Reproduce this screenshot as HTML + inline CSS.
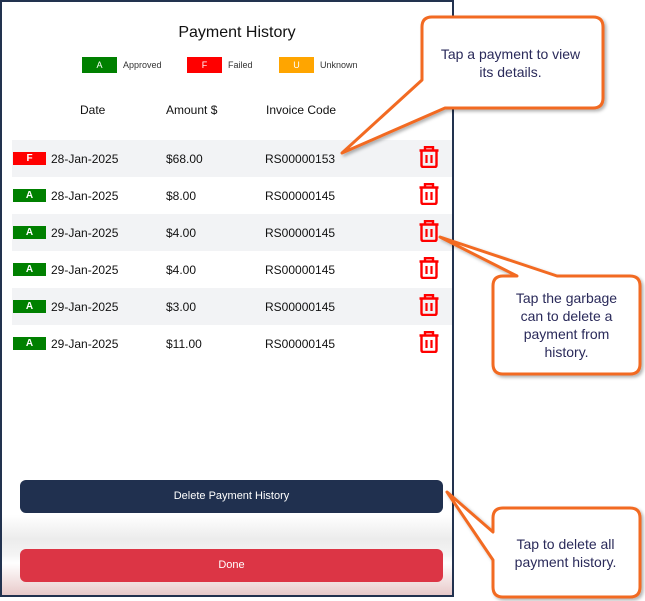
<!DOCTYPE html>
<html><head><meta charset="utf-8"><style>
body{margin:0;width:645px;height:601px;background:#fff;position:relative;overflow:hidden;font-family:"Liberation Sans",sans-serif;}
.frame{position:absolute;left:0;top:0;width:450px;height:593px;border:2px solid #22324f;background:#fff;}
.t{position:absolute;color:#111;white-space:nowrap;}
.title{left:10px;width:454px;text-align:center;top:24px;font-size:16px;}
.badge{position:absolute;height:16px;color:#fff;font-size:9px;text-align:center;line-height:16px;}
.lg{position:absolute;font-size:9px;color:#333;top:60px;}
.hd{position:absolute;top:103px;font-size:12px;color:#111;}
.row{position:absolute;left:12px;width:440px;height:37px;}
.row .b{position:absolute;left:1px;top:12px;width:33px;height:13px;color:#fff;font-size:10px;font-weight:bold;text-align:center;line-height:13px;}
.row span{position:absolute;top:12px;font-size:12px;color:#111;}
.row svg{position:absolute;left:407px;top:6px;}
.btn{position:absolute;left:20px;width:423px;height:33px;border-radius:6px;color:#fff;font-size:11px;text-align:center;line-height:33px;}
.ct{position:absolute;color:#2a2a5a;font-size:14px;text-align:center;line-height:18px;}
</style></head><body>
<div class="frame"></div>
<div style="position:absolute;left:2px;top:515px;width:450px;height:80px;background:linear-gradient(#fff,#ececec 30%,#f4f4f4 50%,#fff 60%,#e8caca)"></div>
<div class="t title">Payment History</div>
<div class="badge" style="left:82px;top:57px;width:35px;background:#008000">A</div><div class="lg" style="left:123px">Approved</div>
<div class="badge" style="left:187px;top:57px;width:35px;background:#f00">F</div><div class="lg" style="left:228px">Failed</div>
<div class="badge" style="left:279px;top:57px;width:35px;background:#ffa500">U</div><div class="lg" style="left:320px">Unknown</div>
<div class="hd" style="left:80px">Date</div><div class="hd" style="left:166px">Amount $</div><div class="hd" style="left:266px">Invoice Code</div>

<div class="row" style="top:140px;background:#f2f3f5"><div class="b" style="background:#f00">F</div><span style="left:39px">28-Jan-2025</span><span style="left:154px">$68.00</span><span style="left:253px">RS00000153</span><svg width="20" height="22" viewBox="0 0 20 22"><path d="M0.5 4.5H19.5M6 4V1.2H14V4M2.5 5V19Q2.5 21 4.5 21H15.5Q17.5 21 17.5 19V5" fill="none" stroke="#f00" stroke-width="2.4"/><path d="M7.5 9V17M12.5 9V17" stroke="#f00" stroke-width="2.2"/></svg></div>
<div class="row" style="top:177px"><div class="b" style="background:#008000">A</div><span style="left:39px">28-Jan-2025</span><span style="left:154px">$8.00</span><span style="left:253px">RS00000145</span><svg width="20" height="22" viewBox="0 0 20 22"><path d="M0.5 4.5H19.5M6 4V1.2H14V4M2.5 5V19Q2.5 21 4.5 21H15.5Q17.5 21 17.5 19V5" fill="none" stroke="#f00" stroke-width="2.4"/><path d="M7.5 9V17M12.5 9V17" stroke="#f00" stroke-width="2.2"/></svg></div>
<div class="row" style="top:214px;background:#f2f3f5"><div class="b" style="background:#008000">A</div><span style="left:39px">29-Jan-2025</span><span style="left:154px">$4.00</span><span style="left:253px">RS00000145</span><svg width="20" height="22" viewBox="0 0 20 22"><path d="M0.5 4.5H19.5M6 4V1.2H14V4M2.5 5V19Q2.5 21 4.5 21H15.5Q17.5 21 17.5 19V5" fill="none" stroke="#f00" stroke-width="2.4"/><path d="M7.5 9V17M12.5 9V17" stroke="#f00" stroke-width="2.2"/></svg></div>
<div class="row" style="top:251px"><div class="b" style="background:#008000">A</div><span style="left:39px">29-Jan-2025</span><span style="left:154px">$4.00</span><span style="left:253px">RS00000145</span><svg width="20" height="22" viewBox="0 0 20 22"><path d="M0.5 4.5H19.5M6 4V1.2H14V4M2.5 5V19Q2.5 21 4.5 21H15.5Q17.5 21 17.5 19V5" fill="none" stroke="#f00" stroke-width="2.4"/><path d="M7.5 9V17M12.5 9V17" stroke="#f00" stroke-width="2.2"/></svg></div>
<div class="row" style="top:288px;background:#f2f3f5"><div class="b" style="background:#008000">A</div><span style="left:39px">29-Jan-2025</span><span style="left:154px">$3.00</span><span style="left:253px">RS00000145</span><svg width="20" height="22" viewBox="0 0 20 22"><path d="M0.5 4.5H19.5M6 4V1.2H14V4M2.5 5V19Q2.5 21 4.5 21H15.5Q17.5 21 17.5 19V5" fill="none" stroke="#f00" stroke-width="2.4"/><path d="M7.5 9V17M12.5 9V17" stroke="#f00" stroke-width="2.2"/></svg></div>
<div class="row" style="top:325px"><div class="b" style="background:#008000">A</div><span style="left:39px">29-Jan-2025</span><span style="left:154px">$11.00</span><span style="left:253px">RS00000145</span><svg width="20" height="22" viewBox="0 0 20 22"><path d="M0.5 4.5H19.5M6 4V1.2H14V4M2.5 5V19Q2.5 21 4.5 21H15.5Q17.5 21 17.5 19V5" fill="none" stroke="#f00" stroke-width="2.4"/><path d="M7.5 9V17M12.5 9V17" stroke="#f00" stroke-width="2.2"/></svg></div>

<div class="btn" style="top:480px;background:#20304f">Delete Payment History</div>
<div class="btn" style="top:549px;background:#dc3545">Done</div>

<svg style="position:absolute;left:0;top:0" width="645" height="601">
<defs><filter id="s"><feDropShadow dx="2" dy="2" stdDeviation="1.5" flood-color="#000" flood-opacity=".3"/></filter></defs>
<g fill="#fff" stroke="#f26b21" stroke-width="3" stroke-linejoin="round" filter="url(#s)">
<path d="M432,17 H593 Q603,17 603,27 V98 Q603,108 593,108 H445 L342,153 L422,80 V27 Q422,17 432,17 Z"/>
<path d="M503,276 H517 L440,237 L557,276 H630 Q640,276 640,286 V364 Q640,374 630,374 H503 Q493,374 493,364 V286 Q493,276 503,276 Z"/>
<path d="M503,508 H630 Q640,508 640,518 V587 Q640,597 630,597 H503 Q493,597 493,587 V560 L447,492 L493,532 V518 Q493,508 503,508 Z"/>
</g></svg>
<div class="ct" style="left:420px;width:181px;top:45px">Tap a payment to view<br>its details.</div>
<div class="ct" style="left:493px;width:147px;top:289px">Tap the garbage<br>can to delete a<br>payment from<br>history.</div>
<div class="ct" style="left:492px;width:147px;top:535px">Tap to delete all<br>payment history.</div>
</body></html>
